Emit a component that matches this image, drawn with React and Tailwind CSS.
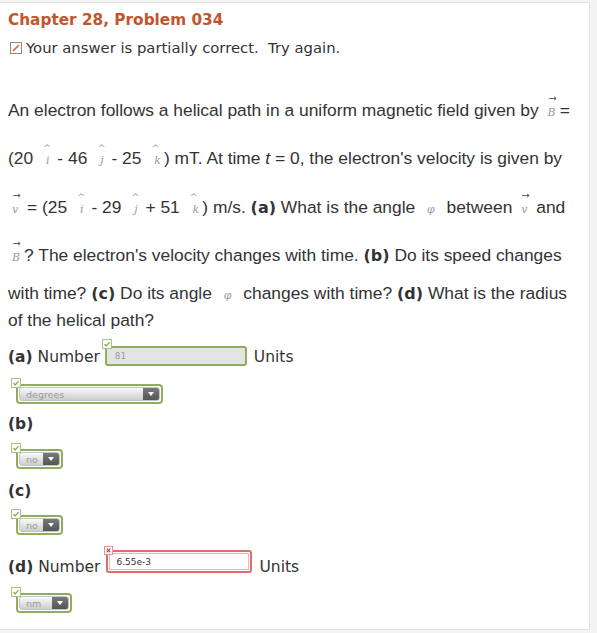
import React from "react";

const body = "font-['Liberation_Sans',Arial,sans-serif]";
const verd = "font-['DejaVu_Sans',Verdana,sans-serif]";

function Hat({ ch }) {
  return (
    <span className="relative inline-block pl-[8px] pr-[3px] font-['DejaVu_Serif',serif] text-[11px] italic text-[#999]">
      <span className="absolute -top-[13px] left-[5px] not-italic text-[10px]">^</span>
      {ch}
    </span>
  );
}

function Vec({ ch }) {
  return (
    <span className="relative inline-block px-[4px] font-['DejaVu_Serif',serif] text-[11px] italic text-[#999]">
      <svg viewBox="0 0 8 5" className="absolute -top-[5px] left-[5px] h-[5px] w-[8px]">
        <path d="M0 2.5 H7 M5 0.8 L7.2 2.5 L5 4.2" fill="none" stroke="#555" strokeWidth="0.9" />
      </svg>
      {ch}
    </span>
  );
}

function Phi() {
  return (
    <span className="inline-block px-[7px] font-['DejaVu_Serif',serif] text-[11px] italic text-[#999]">φ</span>
  );
}

function B({ children }) {
  return <span className={`${verd} text-[16px] font-bold`}>{children}</span>;
}

function Check({ className }) {
  return (
    <svg viewBox="0 0 10 10" className={`absolute h-[10px] w-[10px] ${className}`}>
      <rect x="0.5" y="0.5" width="9" height="9" fill="#fff" stroke="#a9c47a" />
      <path d="M2.5 5.2 L4.2 6.8 L7.6 3.2" fill="none" stroke="#7fa24a" strokeWidth="1.2" />
    </svg>
  );
}

function Cross({ className }) {
  return (
    <svg viewBox="0 0 10 10" className={`absolute h-[9px] w-[9px] ${className}`}>
      <rect x="0.5" y="0.5" width="9" height="9" fill="#fff" stroke="#e58b8b" />
      <path d="M3 3 L7 7 M7 3 L3 7" fill="none" stroke="#d33" strokeWidth="1.3" />
    </svg>
  );
}

function Select({ width, label }) {
  return (
    <div className="relative ml-[8px] self-start">
      <Check className="-left-[5px] -top-[6px]" />
      <div className={`${width} rounded-[4px] border-2 border-[#8fad5c] bg-white p-[1px]`}>
        <div className="flex h-[14px] overflow-hidden rounded-[3px] border border-[#c4c4c4] bg-gradient-to-b from-[#fafafa] to-[#cdcdcd]">
          <div className={`${verd} flex-1 pl-[6px] text-[9.5px] leading-[13px] text-[#9a9a9a]`}>{label}</div>
          <div className="flex w-[16px] items-center justify-center bg-gradient-to-b from-[#7a7a7a] to-[#555]">
            <svg viewBox="0 0 6 4" className="h-[4px] w-[6px]">
              <path d="M0 0 L6 0 L3 4 Z" fill="#fff" />
            </svg>
          </div>
        </div>
      </div>
    </div>
  );
}

export default function App() {
  return (
    <div className="relative h-[633px] w-[597px] overflow-hidden bg-[#f4f4f4]">
      <div className="mt-[2px] h-[628px] w-[590px] border-r border-t border-b border-[#e2e2e2] bg-white">
        <div className="flex flex-col pl-[8px] text-[#333]">
          <div className={`${verd} mt-[7px] text-[15.3px] font-bold leading-[20px] text-[#c4552b]`}>
            Chapter 28, Problem 034
          </div>

          <div className={`${verd} mt-[9px] flex items-center gap-[4px] pl-[2px] text-[14.8px] leading-[18px]`}>
            <svg viewBox="0 0 12 12" className="h-[12px] w-[12px] shrink-0">
              <rect x="0.5" y="0.5" width="11" height="11" fill="#fff" stroke="#8a8a8a" />
              <path d="M3 9 L8.5 3.5" stroke="#d2692f" strokeWidth="1.6" />
              <path d="M8 2.5 L9.5 4" stroke="#d2692f" strokeWidth="1" />
            </svg>
            <span className="whitespace-pre">Your answer is partially correct.  Try again.</span>
          </div>

          <div className={`${body} text-[17.4px] leading-[24px] whitespace-nowrap`}>
            <div className="mt-[41px]">
              An electron follows a helical path in a uniform magnetic field given by <Vec ch="B" />=
            </div>
            <div className="mt-[21px]">
              (20 <Hat ch="i" /> - 46 <Hat ch="j" /> - 25 <Hat ch="k" />) mT. At time <i>t</i> = 0, the electron's velocity is given by
            </div>
            <div className="mt-[22px]">
              <Vec ch="v" /> = (25 <Hat ch="i" /> - 29 <Hat ch="j" /> + 51 <Hat ch="k" />) m/s. <B>(a)</B> What is the angle <Phi /> between <Vec ch="v" /> and
            </div>
            <div className="mt-[21px]">
              <Vec ch="B" />? The electron's velocity changes with time. <B>(b)</B> Do its speed changes
            </div>
            <div className="mt-[11px]">
              with time? <B>(c)</B> Do its angle <Phi /> changes with time? <B>(d)</B> What is the radius
            </div>
            <div className="mt-[0px]">of the helical path?</div>
          </div>

          <div className={`${verd} mt-[14px] flex items-end text-[15.5px] leading-[20px]`}>
            <span className="mb-[-1px]"><b>(a)</b> Number</span>
            <div className="relative ml-[5px]">
              <Check className="-left-[3px] -top-[7px]" />
              <div className="flex h-[20px] w-[142px] items-center rounded-[3px] border-2 border-[#8fad5c] bg-[#e4e4e4] pl-[8px]">
                <span className="text-[9px] text-[#999]">81</span>
              </div>
            </div>
            <span className="ml-[7px] mb-[-1px]">Units</span>
          </div>

          <div className="mt-[18px]">
            <Select width="w-[147px]" label="degrees" />
          </div>

          <div className={`${verd} mt-[10px] text-[15.5px] font-bold leading-[20px]`}>(b)</div>
          <div className="mt-[15px]">
            <Select width="w-[47px]" label="no" />
          </div>

          <div className={`${verd} mt-[12px] text-[15.5px] font-bold leading-[20px]`}>(c)</div>
          <div className="mt-[14px]">
            <Select width="w-[47px]" label="no" />
          </div>

          <div className={`${verd} mt-[15px] flex items-end text-[15.5px] leading-[20px]`}>
            <span className="relative top-[4px]"><b>(d)</b> Number</span>
            <div className="relative ml-[6px]">
              <Cross className="-left-[2px] -top-[4px]" />
              <div className="rounded-[3px] border-2 border-[#e46b6b] bg-white p-[1px]">
                <div className="flex h-[17px] w-[140px] items-center border border-[#f0b5b5] pl-[6px]">
                  <span className="text-[9px] text-[#333]">6.55e-3</span>
                </div>
              </div>
            </div>
            <span className="relative top-[4px] ml-[7px]">Units</span>
          </div>

          <div className="mt-[20px]">
            <Select width="w-[56px]" label="nm" />
          </div>
        </div>
      </div>
    </div>
  );
}
